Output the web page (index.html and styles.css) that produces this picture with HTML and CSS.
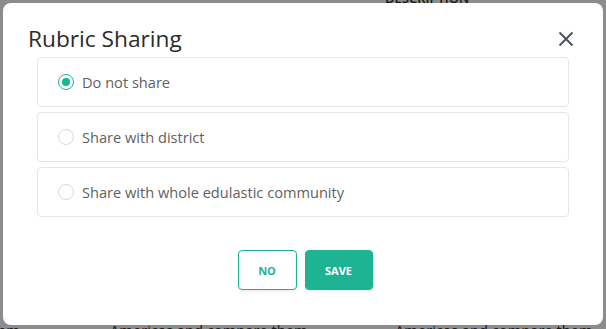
FILE: index.html
```html
<!DOCTYPE html>
<html lang="en">
<head>
    <meta charset="UTF-8">
    <meta name="viewport" content="width=device-width, initial-scale=1.0">
    <title>Rubric Sharing</title>
    <link rel="stylesheet" href="styles.css">
</head>
<body>
    <div class="page">
        <div class="page-head"><span class="col-title">DESCRIPTION</span></div>
        <div class="page-rows">
            <div class="page-cell first">em</div>
            <div class="page-cell">Americas and compare them</div>
            <div class="page-cell">Americas and compare them</div>
        </div>
    </div>

    <div class="overlay"></div>

    <div class="modal">
        <div class="modal-head">
            <h2 class="modal-title">Rubric Sharing</h2>
            <button class="close-btn" aria-label="Close">
                <svg width="16" height="16" viewBox="0 0 16 16">
                    <path d="M1.5 1.5 L14.5 14.5 M14.5 1.5 L1.5 14.5" stroke="#454b63" stroke-width="1.8" fill="none"/>
                </svg>
            </button>
        </div>

        <div class="options">
            <label class="option">
                <span class="radio checked"></span>
                <span class="option-text">Do not share</span>
            </label>
            <label class="option">
                <span class="radio"></span>
                <span class="option-text">Share with district</span>
            </label>
            <label class="option">
                <span class="radio"></span>
                <span class="option-text">Share with whole edulastic community</span>
            </label>
        </div>

        <div class="actions">
            <button class="btn btn-no">NO</button>
            <button class="btn btn-save">SAVE</button>
        </div>
    </div>
</body>
</html>
```

FILE: styles.css
```css
body {
    margin: 0;
    font-family: "Open Sans", "Liberation Sans", sans-serif;
    background-color: #ffffff;
    overflow: hidden;
    height: 329px;
}

.page {
    height: 329px;
    color: #2f2f2f;
}

.page-head {
    height: 8px;
    overflow: hidden;
}

.col-title {
    display: block;
    margin-left: 385px;
    margin-top: -11px;
    font-size: 13px;
    font-weight: 600;
}

.page-rows {
    display: flex;
    margin-top: 312px;
    font-size: 14.7px;
}

.page-cell {
    white-space: nowrap;
}

.page-cell.first {
    width: 18px;
    margin-left: -2px;
}

.page-cell + .page-cell {
    padding-left: 94px;
    width: 191px;
}

.overlay {
    position: fixed;
    top: 0;
    left: 0;
    right: 0;
    bottom: 0;
    background-color: rgba(0, 0, 0, 0.45);
}

.modal {
    position: fixed;
    top: 3px;
    left: 3px;
    width: 600px;
    height: 322px;
    box-sizing: border-box;
    background: #ffffff;
    border-radius: 8px;
    padding: 21px 29px 0 25px;
}

.modal-head {
    display: flex;
    justify-content: space-between;
    align-items: flex-start;
    height: 33px;
}

.modal-title {
    margin: 0;
    font-size: 22.7px;
    line-height: 30px;
    font-weight: 400;
    color: #2b2b2b;
}

.close-btn {
    border: none;
    background: none;
    padding: 0;
    width: 16px;
    height: 16px;
    margin-top: 7px;
    cursor: pointer;
}

.close-btn svg {
    display: block;
}

.options {
    display: flex;
    flex-direction: column;
    gap: 5px;
    margin: 0 5px 0 9px;
}

.option {
    display: flex;
    align-items: center;
    height: 50px;
    box-sizing: border-box;
    border: 1px solid #e6e6e6;
    border-radius: 4px;
    padding-left: 20px;
    cursor: pointer;
}

.radio {
    width: 16px;
    height: 16px;
    box-sizing: border-box;
    border: 1px solid #d9d9d9;
    border-radius: 50%;
    position: relative;
    margin-right: 8px;
    background: #ffffff;
}

.radio.checked {
    border-color: #1ab394;
}

.radio.checked::after {
    content: "";
    position: absolute;
    top: 3px;
    left: 3px;
    width: 8px;
    height: 8px;
    border-radius: 50%;
    background-color: #1ab394;
}

.option-text {
    font-size: 14.6px;
    color: #5f5f5f;
}

.actions {
    display: flex;
    justify-content: center;
    gap: 8px;
    margin-top: 33px;
    margin-left: 8px;
}

.btn {
    height: 40px;
    border-radius: 4px;
    font-family: "Open Sans", "Liberation Sans", sans-serif;
    font-size: 11px;
    font-weight: 700;
    cursor: pointer;
    box-shadow: 0 2px 3px rgba(0, 0, 0, 0.07);
}

.btn-no {
    width: 59px;
    background: #ffffff;
    border: 1px solid #1ab394;
    color: #1ab394;
}

.btn-save {
    width: 68px;
    background: #1db393;
    border: 1px solid #1db393;
    color: #ffffff;
}
```
